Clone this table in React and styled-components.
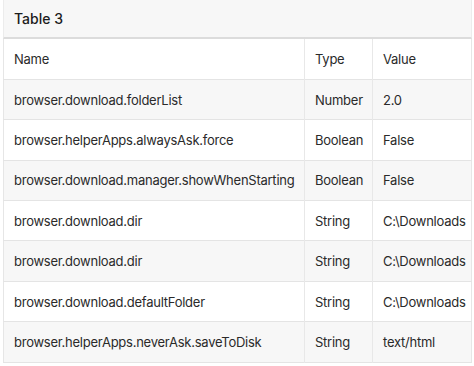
import React from "react";
import styled, { createGlobalStyle } from "styled-components";

const Global = createGlobalStyle`
  body {
    margin: 0;
    background: #fff;
    font-family: "Inter", "Noto Sans", sans-serif;
    color: #222;
  }
`;

const Wrap = styled.div`
  padding: 0 3px;
`;

const Table = styled.table`
  width: 468px;
  table-layout: fixed;
  border-collapse: collapse;
  font-size: 13px;
  letter-spacing: -0.25px;
  border-left: 1px solid #e6e6e6;
  border-right: 1px solid #e6e6e6;
  border-bottom: 1px solid #e0e0e0;
`;

const Caption = styled.caption`
  text-align: left;
  background: #f7f7f7;
  height: 37px;
  padding: 0 10px;
  line-height: 37px;
  font-size: 14px;
  letter-spacing: 0;
  font-weight: 500;
  color: #1c1c1c;
  border-left: 1px solid #ececec;
  border-right: 1px solid #ececec;
  border-bottom: 2px solid #dcdcdc;
`;

const Row = styled.tr`
  background: ${(p) => (p.$striped ? "#f7f7f7" : "#fff")};
  border-bottom: 1px solid #e4e4e4;
`;

const Th = styled.th`
  box-sizing: border-box;
  text-align: left;
  font-weight: 400;
  width: ${(p) => p.$w}px;
  height: 40.4px;
  padding: 0 10px;
  color: #2a2a2a;
  border-right: 1px solid #e8e8e8;
  &:last-child {
    border-right: none;
  }
`;

const Td = styled.td`
  box-sizing: border-box;
  height: 40.4px;
  padding: 0 10px;
  color: #2a2a2a;
  white-space: nowrap;
  border-right: 1px solid #e8e8e8;
  &:last-child {
    border-right: none;
  }
`;

const rows = [
  ["browser.download.folderList", "Number", "2.0"],
  ["browser.helperApps.alwaysAsk.force", "Boolean", "False"],
  ["browser.download.manager.showWhenStarting", "Boolean", "False"],
  ["browser.download.dir", "String", "C:\\Downloads"],
  ["browser.download.dir", "String", "C:\\Downloads"],
  ["browser.download.defaultFolder", "String", "C:\\Downloads"],
  ["browser.helperApps.neverAsk.saveToDisk", "String", "text/html"],
];

export default function App() {
  return (
    <Wrap>
      <Global />
      <Table>
        <Caption>Table 3</Caption>
        <thead>
          <Row>
            <Th $w={301}>Name</Th>
            <Th $w={68}>Type</Th>
            <Th $w={99}>Value</Th>
          </Row>
        </thead>
        <tbody>
          {rows.map((r, i) => (
            <Row key={i} $striped={i % 2 === 0}>
              <Td>{r[0]}</Td>
              <Td>{r[1]}</Td>
              <Td>{r[2]}</Td>
            </Row>
          ))}
        </tbody>
      </Table>
    </Wrap>
  );
}
